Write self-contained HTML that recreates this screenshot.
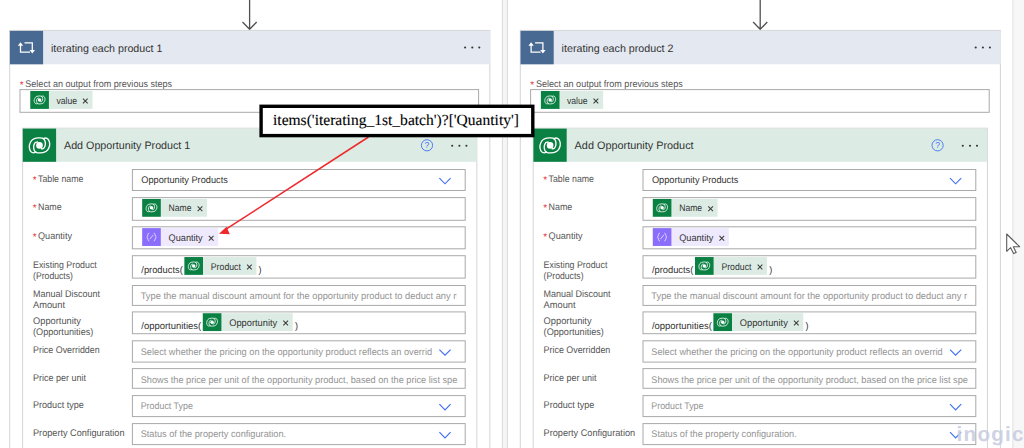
<!DOCTYPE html>
<html><head><meta charset="utf-8"><title>flow</title><style>
html,body{margin:0;padding:0;background:#fff}
body{width:1024px;height:448px;overflow:hidden;position:relative;font-family:"Liberation Sans",sans-serif}
svg{position:absolute;left:0;top:0;display:block}
text{white-space:pre;text-rendering:geometricPrecision}

</style></head><body>
<svg width="1024" height="448" viewBox="0 0 1024 448">
<rect x="502.4" y="0" width="5" height="448" fill="#f6f6f6"/>
<line x1="502.4" y1="0" x2="502.4" y2="448" stroke="#d9d9d9" stroke-width="1"/>
<line x1="507.4" y1="0" x2="507.4" y2="448" stroke="#d9d9d9" stroke-width="1"/>
<rect x="1012.9" y="0" width="12" height="448" fill="#f7f7f7"/>
<line x1="1012.9" y1="0" x2="1012.9" y2="448" stroke="#e0e0e0" stroke-width="1"/>
<path d="M249.6,0 V29 M242.5,22 L249.6,29.3 L256.7,22" fill="none" stroke="#505050" stroke-width="1.3"/>
<path d="M760.2,0 V29 M753.1,22 L760.2,29.3 L767.3000000000001,22" fill="none" stroke="#505050" stroke-width="1.3"/>
<rect x="9.70" y="30.40" width="480.10" height="439.60" fill="none" stroke="#d4d4d4" stroke-width="1"/>
<rect x="9.90" y="30.90" width="480.30" height="33.40" fill="#e4e8f0"/>
<rect x="9.90" y="30.90" width="33.20" height="33.40" fill="#486991"/>
<g transform="translate(0.00,0)"><g fill="none" stroke="#fff" stroke-width="1.25"><path d="M20.5,44 V52.2 H30"/><path d="M24.5,42.9 H32.3 V51"/></g><path d="M17.8,45.7 L20.5,42.2 L23.2,45.7 Z M29.6,50 L32.3,53.5 L35,50 Z" fill="#fff"/></g>
<circle cx="465.10" cy="47.50" r="1.05" fill="#333"/>
<circle cx="472.30" cy="47.50" r="1.05" fill="#333"/>
<circle cx="479.30" cy="47.50" r="1.05" fill="#333"/>
<rect x="20.00" y="89.60" width="458.60" height="22.70" fill="#fff" stroke="#a9a9a9" stroke-width="1"/>
<rect x="30.30" y="91.00" width="62.20" height="17.90" fill="#dcece4"/>
<rect x="30.30" y="91.00" width="18.60" height="17.90" fill="#0a8143"/>
<g transform="translate(39.60,99.95) scale(0.530)" fill="none" stroke="#fff" stroke-width="1.51" stroke-linecap="round" stroke-linejoin="round"><path d="M3.60,-6.60 C3.98,-6.73 5.07,-7.47 5.90,-7.40 C6.73,-7.33 7.92,-6.93 8.60,-6.20 C9.28,-5.47 9.77,-4.13 10.00,-3.00 C10.23,-1.87 10.33,-0.70 10.00,0.60 C9.67,1.90 8.83,3.77 8.00,4.80 C7.17,5.83 6.17,6.35 5.00,6.80 C3.83,7.25 2.33,7.43 1.00,7.50 C-0.33,7.57 -2.02,7.52 -3.00,7.20 C-3.98,6.88 -4.43,6.33 -4.90,5.60 C-5.37,4.87 -5.68,3.77 -5.80,2.80 C-5.92,1.83 -5.87,0.73 -5.60,-0.20 C-5.33,-1.13 -4.80,-2.27 -4.20,-2.80 C-3.60,-3.33 -2.37,-3.30 -2.00,-3.40"/><path d="M3.60,-6.60 C3.98,-6.73 5.07,-7.47 5.90,-7.40 C6.73,-7.33 7.92,-6.93 8.60,-6.20 C9.28,-5.47 9.77,-4.13 10.00,-3.00 C10.23,-1.87 10.33,-0.70 10.00,0.60 C9.67,1.90 8.83,3.77 8.00,4.80 C7.17,5.83 6.17,6.35 5.00,6.80 C3.83,7.25 2.33,7.43 1.00,7.50 C-0.33,7.57 -2.02,7.52 -3.00,7.20 C-3.98,6.88 -4.43,6.33 -4.90,5.60 C-5.37,4.87 -5.68,3.77 -5.80,2.80 C-5.92,1.83 -5.87,0.73 -5.60,-0.20 C-5.33,-1.13 -4.80,-2.27 -4.20,-2.80 C-3.60,-3.33 -2.37,-3.30 -2.00,-3.40" transform="rotate(180)"/><circle cx="0" cy="0" r="3.3" fill="#fff" stroke="none"/></g>
<path d="M82.95,98.65 L87.65,103.35 M87.65,98.65 L82.95,103.35" stroke="#3c3c3c" stroke-width="1.05" fill="none"/>
<rect x="22.60" y="128.20" width="454.20" height="341.80" fill="none" stroke="#d4d4d4" stroke-width="1"/>
<rect x="22.80" y="128.60" width="454.00" height="33.20" fill="#dcece4"/>
<rect x="22.80" y="128.60" width="33.30" height="33.20" fill="#0a8143"/>
<g transform="translate(39.50,145.40) scale(1.000)" fill="none" stroke="#fff" stroke-width="1.35" stroke-linecap="round" stroke-linejoin="round"><path d="M3.60,-6.60 C3.98,-6.73 5.07,-7.47 5.90,-7.40 C6.73,-7.33 7.92,-6.93 8.60,-6.20 C9.28,-5.47 9.77,-4.13 10.00,-3.00 C10.23,-1.87 10.33,-0.70 10.00,0.60 C9.67,1.90 8.83,3.77 8.00,4.80 C7.17,5.83 6.17,6.35 5.00,6.80 C3.83,7.25 2.33,7.43 1.00,7.50 C-0.33,7.57 -2.02,7.52 -3.00,7.20 C-3.98,6.88 -4.43,6.33 -4.90,5.60 C-5.37,4.87 -5.68,3.77 -5.80,2.80 C-5.92,1.83 -5.87,0.73 -5.60,-0.20 C-5.33,-1.13 -4.80,-2.27 -4.20,-2.80 C-3.60,-3.33 -2.37,-3.30 -2.00,-3.40"/><path d="M3.60,-6.60 C3.98,-6.73 5.07,-7.47 5.90,-7.40 C6.73,-7.33 7.92,-6.93 8.60,-6.20 C9.28,-5.47 9.77,-4.13 10.00,-3.00 C10.23,-1.87 10.33,-0.70 10.00,0.60 C9.67,1.90 8.83,3.77 8.00,4.80 C7.17,5.83 6.17,6.35 5.00,6.80 C3.83,7.25 2.33,7.43 1.00,7.50 C-0.33,7.57 -2.02,7.52 -3.00,7.20 C-3.98,6.88 -4.43,6.33 -4.90,5.60 C-5.37,4.87 -5.68,3.77 -5.80,2.80 C-5.92,1.83 -5.87,0.73 -5.60,-0.20 C-5.33,-1.13 -4.80,-2.27 -4.20,-2.80 C-3.60,-3.33 -2.37,-3.30 -2.00,-3.40" transform="rotate(180)"/><circle cx="0" cy="0" r="3.3" fill="#fff" stroke="none"/></g>
<circle cx="427.00" cy="145.3" r="5.6" fill="none" stroke="#4070f4" stroke-width="0.9"/>
<circle cx="452.20" cy="145.70" r="1.05" fill="#333"/>
<circle cx="459.40" cy="145.70" r="1.05" fill="#333"/>
<circle cx="466.40" cy="145.70" r="1.05" fill="#333"/>
<rect x="132.40" y="169.50" width="332.80" height="21.00" fill="#fff" stroke="#a9a9a9" stroke-width="1"/>
<path d="M439.40,178.10 L445.00,183.80 L450.60,178.10" fill="none" stroke="#4070f4" stroke-width="1.15"/>
<rect x="132.40" y="197.60" width="332.80" height="22.70" fill="#fff" stroke="#a9a9a9" stroke-width="1"/>
<rect x="142.20" y="198.95" width="64.80" height="17.80" fill="#dcece4"/>
<rect x="142.20" y="198.95" width="18.60" height="17.80" fill="#0a8143"/>
<g transform="translate(151.50,207.85) scale(0.530)" fill="none" stroke="#fff" stroke-width="1.51" stroke-linecap="round" stroke-linejoin="round"><path d="M3.60,-6.60 C3.98,-6.73 5.07,-7.47 5.90,-7.40 C6.73,-7.33 7.92,-6.93 8.60,-6.20 C9.28,-5.47 9.77,-4.13 10.00,-3.00 C10.23,-1.87 10.33,-0.70 10.00,0.60 C9.67,1.90 8.83,3.77 8.00,4.80 C7.17,5.83 6.17,6.35 5.00,6.80 C3.83,7.25 2.33,7.43 1.00,7.50 C-0.33,7.57 -2.02,7.52 -3.00,7.20 C-3.98,6.88 -4.43,6.33 -4.90,5.60 C-5.37,4.87 -5.68,3.77 -5.80,2.80 C-5.92,1.83 -5.87,0.73 -5.60,-0.20 C-5.33,-1.13 -4.80,-2.27 -4.20,-2.80 C-3.60,-3.33 -2.37,-3.30 -2.00,-3.40"/><path d="M3.60,-6.60 C3.98,-6.73 5.07,-7.47 5.90,-7.40 C6.73,-7.33 7.92,-6.93 8.60,-6.20 C9.28,-5.47 9.77,-4.13 10.00,-3.00 C10.23,-1.87 10.33,-0.70 10.00,0.60 C9.67,1.90 8.83,3.77 8.00,4.80 C7.17,5.83 6.17,6.35 5.00,6.80 C3.83,7.25 2.33,7.43 1.00,7.50 C-0.33,7.57 -2.02,7.52 -3.00,7.20 C-3.98,6.88 -4.43,6.33 -4.90,5.60 C-5.37,4.87 -5.68,3.77 -5.80,2.80 C-5.92,1.83 -5.87,0.73 -5.60,-0.20 C-5.33,-1.13 -4.80,-2.27 -4.20,-2.80 C-3.60,-3.33 -2.37,-3.30 -2.00,-3.40" transform="rotate(180)"/><circle cx="0" cy="0" r="3.3" fill="#fff" stroke="none"/></g>
<path d="M197.65,206.35 L202.35,211.05 M202.35,206.35 L197.65,211.05" stroke="#3c3c3c" stroke-width="1.05" fill="none"/>
<rect x="132.40" y="226.80" width="332.80" height="22.00" fill="#fff" stroke="#a9a9a9" stroke-width="1"/>
<rect x="142.20" y="228.15" width="76.00" height="17.80" fill="#eee9fd"/>
<rect x="142.20" y="228.15" width="18.60" height="17.80" fill="#8b6dfb"/>
<g transform="translate(151.50,237.05)" fill="none" stroke="#e4dcff" stroke-width="0.9" stroke-linecap="round"><path d="M-2.6,-4 C-4.2,-4 -3.2,-0.6 -4.7,0 C-3.2,0.6 -4.2,4 -2.6,4"/><path d="M2.6,-4 C4.2,-4 3.2,-0.6 4.7,0 C3.2,0.6 4.2,4 2.6,4"/><path d="M-1.5,1.8 L1.5,-1.8"/></g>
<path d="M208.85,235.85 L213.55,240.55 M213.55,235.85 L208.85,240.55" stroke="#3c3c3c" stroke-width="1.05" fill="none"/>
<rect x="132.40" y="255.70" width="332.80" height="22.40" fill="#fff" stroke="#a9a9a9" stroke-width="1"/>
<rect x="184.40" y="257.05" width="72.00" height="17.80" fill="#dcece4"/>
<rect x="184.40" y="257.05" width="18.60" height="17.80" fill="#0a8143"/>
<g transform="translate(193.70,265.95) scale(0.530)" fill="none" stroke="#fff" stroke-width="1.51" stroke-linecap="round" stroke-linejoin="round"><path d="M3.60,-6.60 C3.98,-6.73 5.07,-7.47 5.90,-7.40 C6.73,-7.33 7.92,-6.93 8.60,-6.20 C9.28,-5.47 9.77,-4.13 10.00,-3.00 C10.23,-1.87 10.33,-0.70 10.00,0.60 C9.67,1.90 8.83,3.77 8.00,4.80 C7.17,5.83 6.17,6.35 5.00,6.80 C3.83,7.25 2.33,7.43 1.00,7.50 C-0.33,7.57 -2.02,7.52 -3.00,7.20 C-3.98,6.88 -4.43,6.33 -4.90,5.60 C-5.37,4.87 -5.68,3.77 -5.80,2.80 C-5.92,1.83 -5.87,0.73 -5.60,-0.20 C-5.33,-1.13 -4.80,-2.27 -4.20,-2.80 C-3.60,-3.33 -2.37,-3.30 -2.00,-3.40"/><path d="M3.60,-6.60 C3.98,-6.73 5.07,-7.47 5.90,-7.40 C6.73,-7.33 7.92,-6.93 8.60,-6.20 C9.28,-5.47 9.77,-4.13 10.00,-3.00 C10.23,-1.87 10.33,-0.70 10.00,0.60 C9.67,1.90 8.83,3.77 8.00,4.80 C7.17,5.83 6.17,6.35 5.00,6.80 C3.83,7.25 2.33,7.43 1.00,7.50 C-0.33,7.57 -2.02,7.52 -3.00,7.20 C-3.98,6.88 -4.43,6.33 -4.90,5.60 C-5.37,4.87 -5.68,3.77 -5.80,2.80 C-5.92,1.83 -5.87,0.73 -5.60,-0.20 C-5.33,-1.13 -4.80,-2.27 -4.20,-2.80 C-3.60,-3.33 -2.37,-3.30 -2.00,-3.40" transform="rotate(180)"/><circle cx="0" cy="0" r="3.3" fill="#fff" stroke="none"/></g>
<path d="M247.05,264.65 L251.75,269.35 M251.75,264.65 L247.05,269.35" stroke="#3c3c3c" stroke-width="1.05" fill="none"/>
<rect x="132.40" y="285.50" width="332.80" height="19.90" fill="#fff" stroke="#a9a9a9" stroke-width="1"/>
<rect x="132.40" y="311.90" width="332.80" height="21.80" fill="#fff" stroke="#a9a9a9" stroke-width="1"/>
<rect x="202.80" y="313.25" width="89.90" height="17.80" fill="#dcece4"/>
<rect x="202.80" y="313.25" width="18.60" height="17.80" fill="#0a8143"/>
<g transform="translate(212.10,322.15) scale(0.530)" fill="none" stroke="#fff" stroke-width="1.51" stroke-linecap="round" stroke-linejoin="round"><path d="M3.60,-6.60 C3.98,-6.73 5.07,-7.47 5.90,-7.40 C6.73,-7.33 7.92,-6.93 8.60,-6.20 C9.28,-5.47 9.77,-4.13 10.00,-3.00 C10.23,-1.87 10.33,-0.70 10.00,0.60 C9.67,1.90 8.83,3.77 8.00,4.80 C7.17,5.83 6.17,6.35 5.00,6.80 C3.83,7.25 2.33,7.43 1.00,7.50 C-0.33,7.57 -2.02,7.52 -3.00,7.20 C-3.98,6.88 -4.43,6.33 -4.90,5.60 C-5.37,4.87 -5.68,3.77 -5.80,2.80 C-5.92,1.83 -5.87,0.73 -5.60,-0.20 C-5.33,-1.13 -4.80,-2.27 -4.20,-2.80 C-3.60,-3.33 -2.37,-3.30 -2.00,-3.40"/><path d="M3.60,-6.60 C3.98,-6.73 5.07,-7.47 5.90,-7.40 C6.73,-7.33 7.92,-6.93 8.60,-6.20 C9.28,-5.47 9.77,-4.13 10.00,-3.00 C10.23,-1.87 10.33,-0.70 10.00,0.60 C9.67,1.90 8.83,3.77 8.00,4.80 C7.17,5.83 6.17,6.35 5.00,6.80 C3.83,7.25 2.33,7.43 1.00,7.50 C-0.33,7.57 -2.02,7.52 -3.00,7.20 C-3.98,6.88 -4.43,6.33 -4.90,5.60 C-5.37,4.87 -5.68,3.77 -5.80,2.80 C-5.92,1.83 -5.87,0.73 -5.60,-0.20 C-5.33,-1.13 -4.80,-2.27 -4.20,-2.80 C-3.60,-3.33 -2.37,-3.30 -2.00,-3.40" transform="rotate(180)"/><circle cx="0" cy="0" r="3.3" fill="#fff" stroke="none"/></g>
<path d="M283.35,320.65 L288.05,325.35 M288.05,320.65 L283.35,325.35" stroke="#3c3c3c" stroke-width="1.05" fill="none"/>
<rect x="132.40" y="340.80" width="332.80" height="21.30" fill="#fff" stroke="#a9a9a9" stroke-width="1"/>
<path d="M439.40,349.55 L445.00,355.25 L450.60,349.55" fill="none" stroke="#4070f4" stroke-width="1.15"/>
<rect x="132.40" y="368.60" width="332.80" height="19.70" fill="#fff" stroke="#a9a9a9" stroke-width="1"/>
<rect x="132.40" y="395.60" width="332.80" height="21.00" fill="#fff" stroke="#a9a9a9" stroke-width="1"/>
<path d="M439.40,404.20 L445.00,409.90 L450.60,404.20" fill="none" stroke="#4070f4" stroke-width="1.15"/>
<rect x="132.40" y="423.60" width="332.80" height="21.00" fill="#fff" stroke="#a9a9a9" stroke-width="1"/>
<path d="M439.40,432.20 L445.00,437.90 L450.60,432.20" fill="none" stroke="#4070f4" stroke-width="1.15"/>
<rect x="520.30" y="30.40" width="480.10" height="439.60" fill="none" stroke="#d4d4d4" stroke-width="1"/>
<rect x="520.50" y="30.90" width="480.30" height="33.40" fill="#e4e8f0"/>
<rect x="520.50" y="30.90" width="33.20" height="33.40" fill="#486991"/>
<g transform="translate(510.60,0)"><g fill="none" stroke="#fff" stroke-width="1.25"><path d="M20.5,44 V52.2 H30"/><path d="M24.5,42.9 H32.3 V51"/></g><path d="M17.8,45.7 L20.5,42.2 L23.2,45.7 Z M29.6,50 L32.3,53.5 L35,50 Z" fill="#fff"/></g>
<circle cx="975.70" cy="47.50" r="1.05" fill="#333"/>
<circle cx="982.90" cy="47.50" r="1.05" fill="#333"/>
<circle cx="989.90" cy="47.50" r="1.05" fill="#333"/>
<rect x="530.60" y="89.60" width="458.60" height="22.70" fill="#fff" stroke="#a9a9a9" stroke-width="1"/>
<rect x="540.90" y="91.00" width="62.20" height="17.90" fill="#dcece4"/>
<rect x="540.90" y="91.00" width="18.60" height="17.90" fill="#0a8143"/>
<g transform="translate(550.20,99.95) scale(0.530)" fill="none" stroke="#fff" stroke-width="1.51" stroke-linecap="round" stroke-linejoin="round"><path d="M3.60,-6.60 C3.98,-6.73 5.07,-7.47 5.90,-7.40 C6.73,-7.33 7.92,-6.93 8.60,-6.20 C9.28,-5.47 9.77,-4.13 10.00,-3.00 C10.23,-1.87 10.33,-0.70 10.00,0.60 C9.67,1.90 8.83,3.77 8.00,4.80 C7.17,5.83 6.17,6.35 5.00,6.80 C3.83,7.25 2.33,7.43 1.00,7.50 C-0.33,7.57 -2.02,7.52 -3.00,7.20 C-3.98,6.88 -4.43,6.33 -4.90,5.60 C-5.37,4.87 -5.68,3.77 -5.80,2.80 C-5.92,1.83 -5.87,0.73 -5.60,-0.20 C-5.33,-1.13 -4.80,-2.27 -4.20,-2.80 C-3.60,-3.33 -2.37,-3.30 -2.00,-3.40"/><path d="M3.60,-6.60 C3.98,-6.73 5.07,-7.47 5.90,-7.40 C6.73,-7.33 7.92,-6.93 8.60,-6.20 C9.28,-5.47 9.77,-4.13 10.00,-3.00 C10.23,-1.87 10.33,-0.70 10.00,0.60 C9.67,1.90 8.83,3.77 8.00,4.80 C7.17,5.83 6.17,6.35 5.00,6.80 C3.83,7.25 2.33,7.43 1.00,7.50 C-0.33,7.57 -2.02,7.52 -3.00,7.20 C-3.98,6.88 -4.43,6.33 -4.90,5.60 C-5.37,4.87 -5.68,3.77 -5.80,2.80 C-5.92,1.83 -5.87,0.73 -5.60,-0.20 C-5.33,-1.13 -4.80,-2.27 -4.20,-2.80 C-3.60,-3.33 -2.37,-3.30 -2.00,-3.40" transform="rotate(180)"/><circle cx="0" cy="0" r="3.3" fill="#fff" stroke="none"/></g>
<path d="M593.55,98.65 L598.25,103.35 M598.25,98.65 L593.55,103.35" stroke="#3c3c3c" stroke-width="1.05" fill="none"/>
<rect x="533.20" y="128.20" width="454.20" height="341.80" fill="none" stroke="#d4d4d4" stroke-width="1"/>
<rect x="533.40" y="128.60" width="454.00" height="33.20" fill="#dcece4"/>
<rect x="533.40" y="128.60" width="33.30" height="33.20" fill="#0a8143"/>
<g transform="translate(550.10,145.40) scale(1.000)" fill="none" stroke="#fff" stroke-width="1.35" stroke-linecap="round" stroke-linejoin="round"><path d="M3.60,-6.60 C3.98,-6.73 5.07,-7.47 5.90,-7.40 C6.73,-7.33 7.92,-6.93 8.60,-6.20 C9.28,-5.47 9.77,-4.13 10.00,-3.00 C10.23,-1.87 10.33,-0.70 10.00,0.60 C9.67,1.90 8.83,3.77 8.00,4.80 C7.17,5.83 6.17,6.35 5.00,6.80 C3.83,7.25 2.33,7.43 1.00,7.50 C-0.33,7.57 -2.02,7.52 -3.00,7.20 C-3.98,6.88 -4.43,6.33 -4.90,5.60 C-5.37,4.87 -5.68,3.77 -5.80,2.80 C-5.92,1.83 -5.87,0.73 -5.60,-0.20 C-5.33,-1.13 -4.80,-2.27 -4.20,-2.80 C-3.60,-3.33 -2.37,-3.30 -2.00,-3.40"/><path d="M3.60,-6.60 C3.98,-6.73 5.07,-7.47 5.90,-7.40 C6.73,-7.33 7.92,-6.93 8.60,-6.20 C9.28,-5.47 9.77,-4.13 10.00,-3.00 C10.23,-1.87 10.33,-0.70 10.00,0.60 C9.67,1.90 8.83,3.77 8.00,4.80 C7.17,5.83 6.17,6.35 5.00,6.80 C3.83,7.25 2.33,7.43 1.00,7.50 C-0.33,7.57 -2.02,7.52 -3.00,7.20 C-3.98,6.88 -4.43,6.33 -4.90,5.60 C-5.37,4.87 -5.68,3.77 -5.80,2.80 C-5.92,1.83 -5.87,0.73 -5.60,-0.20 C-5.33,-1.13 -4.80,-2.27 -4.20,-2.80 C-3.60,-3.33 -2.37,-3.30 -2.00,-3.40" transform="rotate(180)"/><circle cx="0" cy="0" r="3.3" fill="#fff" stroke="none"/></g>
<circle cx="937.60" cy="145.3" r="5.6" fill="none" stroke="#4070f4" stroke-width="0.9"/>
<circle cx="962.80" cy="145.70" r="1.05" fill="#333"/>
<circle cx="970.00" cy="145.70" r="1.05" fill="#333"/>
<circle cx="977.00" cy="145.70" r="1.05" fill="#333"/>
<rect x="643.00" y="169.50" width="332.80" height="21.00" fill="#fff" stroke="#a9a9a9" stroke-width="1"/>
<path d="M950.00,178.10 L955.60,183.80 L961.20,178.10" fill="none" stroke="#4070f4" stroke-width="1.15"/>
<rect x="643.00" y="197.60" width="332.80" height="22.70" fill="#fff" stroke="#a9a9a9" stroke-width="1"/>
<rect x="652.80" y="198.95" width="64.80" height="17.80" fill="#dcece4"/>
<rect x="652.80" y="198.95" width="18.60" height="17.80" fill="#0a8143"/>
<g transform="translate(662.10,207.85) scale(0.530)" fill="none" stroke="#fff" stroke-width="1.51" stroke-linecap="round" stroke-linejoin="round"><path d="M3.60,-6.60 C3.98,-6.73 5.07,-7.47 5.90,-7.40 C6.73,-7.33 7.92,-6.93 8.60,-6.20 C9.28,-5.47 9.77,-4.13 10.00,-3.00 C10.23,-1.87 10.33,-0.70 10.00,0.60 C9.67,1.90 8.83,3.77 8.00,4.80 C7.17,5.83 6.17,6.35 5.00,6.80 C3.83,7.25 2.33,7.43 1.00,7.50 C-0.33,7.57 -2.02,7.52 -3.00,7.20 C-3.98,6.88 -4.43,6.33 -4.90,5.60 C-5.37,4.87 -5.68,3.77 -5.80,2.80 C-5.92,1.83 -5.87,0.73 -5.60,-0.20 C-5.33,-1.13 -4.80,-2.27 -4.20,-2.80 C-3.60,-3.33 -2.37,-3.30 -2.00,-3.40"/><path d="M3.60,-6.60 C3.98,-6.73 5.07,-7.47 5.90,-7.40 C6.73,-7.33 7.92,-6.93 8.60,-6.20 C9.28,-5.47 9.77,-4.13 10.00,-3.00 C10.23,-1.87 10.33,-0.70 10.00,0.60 C9.67,1.90 8.83,3.77 8.00,4.80 C7.17,5.83 6.17,6.35 5.00,6.80 C3.83,7.25 2.33,7.43 1.00,7.50 C-0.33,7.57 -2.02,7.52 -3.00,7.20 C-3.98,6.88 -4.43,6.33 -4.90,5.60 C-5.37,4.87 -5.68,3.77 -5.80,2.80 C-5.92,1.83 -5.87,0.73 -5.60,-0.20 C-5.33,-1.13 -4.80,-2.27 -4.20,-2.80 C-3.60,-3.33 -2.37,-3.30 -2.00,-3.40" transform="rotate(180)"/><circle cx="0" cy="0" r="3.3" fill="#fff" stroke="none"/></g>
<path d="M708.25,206.35 L712.95,211.05 M712.95,206.35 L708.25,211.05" stroke="#3c3c3c" stroke-width="1.05" fill="none"/>
<rect x="643.00" y="226.80" width="332.80" height="22.00" fill="#fff" stroke="#a9a9a9" stroke-width="1"/>
<rect x="652.80" y="228.15" width="76.00" height="17.80" fill="#eee9fd"/>
<rect x="652.80" y="228.15" width="18.60" height="17.80" fill="#8b6dfb"/>
<g transform="translate(662.10,237.05)" fill="none" stroke="#e4dcff" stroke-width="0.9" stroke-linecap="round"><path d="M-2.6,-4 C-4.2,-4 -3.2,-0.6 -4.7,0 C-3.2,0.6 -4.2,4 -2.6,4"/><path d="M2.6,-4 C4.2,-4 3.2,-0.6 4.7,0 C3.2,0.6 4.2,4 2.6,4"/><path d="M-1.5,1.8 L1.5,-1.8"/></g>
<path d="M719.45,235.85 L724.15,240.55 M724.15,235.85 L719.45,240.55" stroke="#3c3c3c" stroke-width="1.05" fill="none"/>
<rect x="643.00" y="255.70" width="332.80" height="22.40" fill="#fff" stroke="#a9a9a9" stroke-width="1"/>
<rect x="695.00" y="257.05" width="72.00" height="17.80" fill="#dcece4"/>
<rect x="695.00" y="257.05" width="18.60" height="17.80" fill="#0a8143"/>
<g transform="translate(704.30,265.95) scale(0.530)" fill="none" stroke="#fff" stroke-width="1.51" stroke-linecap="round" stroke-linejoin="round"><path d="M3.60,-6.60 C3.98,-6.73 5.07,-7.47 5.90,-7.40 C6.73,-7.33 7.92,-6.93 8.60,-6.20 C9.28,-5.47 9.77,-4.13 10.00,-3.00 C10.23,-1.87 10.33,-0.70 10.00,0.60 C9.67,1.90 8.83,3.77 8.00,4.80 C7.17,5.83 6.17,6.35 5.00,6.80 C3.83,7.25 2.33,7.43 1.00,7.50 C-0.33,7.57 -2.02,7.52 -3.00,7.20 C-3.98,6.88 -4.43,6.33 -4.90,5.60 C-5.37,4.87 -5.68,3.77 -5.80,2.80 C-5.92,1.83 -5.87,0.73 -5.60,-0.20 C-5.33,-1.13 -4.80,-2.27 -4.20,-2.80 C-3.60,-3.33 -2.37,-3.30 -2.00,-3.40"/><path d="M3.60,-6.60 C3.98,-6.73 5.07,-7.47 5.90,-7.40 C6.73,-7.33 7.92,-6.93 8.60,-6.20 C9.28,-5.47 9.77,-4.13 10.00,-3.00 C10.23,-1.87 10.33,-0.70 10.00,0.60 C9.67,1.90 8.83,3.77 8.00,4.80 C7.17,5.83 6.17,6.35 5.00,6.80 C3.83,7.25 2.33,7.43 1.00,7.50 C-0.33,7.57 -2.02,7.52 -3.00,7.20 C-3.98,6.88 -4.43,6.33 -4.90,5.60 C-5.37,4.87 -5.68,3.77 -5.80,2.80 C-5.92,1.83 -5.87,0.73 -5.60,-0.20 C-5.33,-1.13 -4.80,-2.27 -4.20,-2.80 C-3.60,-3.33 -2.37,-3.30 -2.00,-3.40" transform="rotate(180)"/><circle cx="0" cy="0" r="3.3" fill="#fff" stroke="none"/></g>
<path d="M757.65,264.65 L762.35,269.35 M762.35,264.65 L757.65,269.35" stroke="#3c3c3c" stroke-width="1.05" fill="none"/>
<rect x="643.00" y="285.50" width="332.80" height="19.90" fill="#fff" stroke="#a9a9a9" stroke-width="1"/>
<rect x="643.00" y="311.90" width="332.80" height="21.80" fill="#fff" stroke="#a9a9a9" stroke-width="1"/>
<rect x="713.40" y="313.25" width="89.90" height="17.80" fill="#dcece4"/>
<rect x="713.40" y="313.25" width="18.60" height="17.80" fill="#0a8143"/>
<g transform="translate(722.70,322.15) scale(0.530)" fill="none" stroke="#fff" stroke-width="1.51" stroke-linecap="round" stroke-linejoin="round"><path d="M3.60,-6.60 C3.98,-6.73 5.07,-7.47 5.90,-7.40 C6.73,-7.33 7.92,-6.93 8.60,-6.20 C9.28,-5.47 9.77,-4.13 10.00,-3.00 C10.23,-1.87 10.33,-0.70 10.00,0.60 C9.67,1.90 8.83,3.77 8.00,4.80 C7.17,5.83 6.17,6.35 5.00,6.80 C3.83,7.25 2.33,7.43 1.00,7.50 C-0.33,7.57 -2.02,7.52 -3.00,7.20 C-3.98,6.88 -4.43,6.33 -4.90,5.60 C-5.37,4.87 -5.68,3.77 -5.80,2.80 C-5.92,1.83 -5.87,0.73 -5.60,-0.20 C-5.33,-1.13 -4.80,-2.27 -4.20,-2.80 C-3.60,-3.33 -2.37,-3.30 -2.00,-3.40"/><path d="M3.60,-6.60 C3.98,-6.73 5.07,-7.47 5.90,-7.40 C6.73,-7.33 7.92,-6.93 8.60,-6.20 C9.28,-5.47 9.77,-4.13 10.00,-3.00 C10.23,-1.87 10.33,-0.70 10.00,0.60 C9.67,1.90 8.83,3.77 8.00,4.80 C7.17,5.83 6.17,6.35 5.00,6.80 C3.83,7.25 2.33,7.43 1.00,7.50 C-0.33,7.57 -2.02,7.52 -3.00,7.20 C-3.98,6.88 -4.43,6.33 -4.90,5.60 C-5.37,4.87 -5.68,3.77 -5.80,2.80 C-5.92,1.83 -5.87,0.73 -5.60,-0.20 C-5.33,-1.13 -4.80,-2.27 -4.20,-2.80 C-3.60,-3.33 -2.37,-3.30 -2.00,-3.40" transform="rotate(180)"/><circle cx="0" cy="0" r="3.3" fill="#fff" stroke="none"/></g>
<path d="M793.95,320.65 L798.65,325.35 M798.65,320.65 L793.95,325.35" stroke="#3c3c3c" stroke-width="1.05" fill="none"/>
<rect x="643.00" y="340.80" width="332.80" height="21.30" fill="#fff" stroke="#a9a9a9" stroke-width="1"/>
<path d="M950.00,349.55 L955.60,355.25 L961.20,349.55" fill="none" stroke="#4070f4" stroke-width="1.15"/>
<rect x="643.00" y="368.60" width="332.80" height="19.70" fill="#fff" stroke="#a9a9a9" stroke-width="1"/>
<rect x="643.00" y="395.60" width="332.80" height="21.00" fill="#fff" stroke="#a9a9a9" stroke-width="1"/>
<path d="M950.00,404.20 L955.60,409.90 L961.20,404.20" fill="none" stroke="#4070f4" stroke-width="1.15"/>
<rect x="643.00" y="423.60" width="332.80" height="21.00" fill="#fff" stroke="#a9a9a9" stroke-width="1"/>
<path d="M950.00,432.20 L955.60,437.90 L961.20,432.20" fill="none" stroke="#4070f4" stroke-width="1.15"/>
</svg>
<svg width="1024" height="448" viewBox="0 0 1024 448">
<text x="51.00" y="51.90" font-family="Liberation Sans" font-size="10.8" fill="#333" textLength="111.40" lengthAdjust="spacingAndGlyphs">iterating each product 1</text>
<text x="19.70" y="87.80" font-family="Liberation Sans" font-size="10" fill="#e63a40">*</text>
<text x="25.30" y="87.00" font-family="Liberation Sans" font-size="9.6" fill="#555555" textLength="146.80" lengthAdjust="spacingAndGlyphs">Select an output from previous steps</text>
<text x="56.40" y="103.60" font-family="Liberation Sans" font-size="9.6" fill="#333333" textLength="20.60" lengthAdjust="spacingAndGlyphs">value</text>
<text x="64.00" y="149.10" font-family="Liberation Sans" font-size="10.8" fill="#333" textLength="126.30" lengthAdjust="spacingAndGlyphs">Add Opportunity Product 1</text>
<text x="424.60" y="148.40" font-family="Liberation Sans" font-size="8.6" fill="#4070f4">?</text>
<text x="32.70" y="182.70" font-family="Liberation Sans" font-size="10" fill="#e63a40">*</text>
<text x="38.00" y="181.90" font-family="Liberation Sans" font-size="9.6" fill="#555555" textLength="45.40" lengthAdjust="spacingAndGlyphs">Table name</text>
<text x="141.30" y="183.30" font-family="Liberation Sans" font-size="9.6" fill="#333333" textLength="86.50" lengthAdjust="spacingAndGlyphs">Opportunity Products</text>
<text x="32.70" y="210.60" font-family="Liberation Sans" font-size="10" fill="#e63a40">*</text>
<text x="38.00" y="209.80" font-family="Liberation Sans" font-size="9.6" fill="#555555" textLength="23.70" lengthAdjust="spacingAndGlyphs">Name</text>
<text x="168.60" y="211.30" font-family="Liberation Sans" font-size="9.6" fill="#333333" textLength="22.90" lengthAdjust="spacingAndGlyphs">Name</text>
<text x="32.70" y="239.60" font-family="Liberation Sans" font-size="10" fill="#e63a40">*</text>
<text x="38.00" y="238.80" font-family="Liberation Sans" font-size="9.6" fill="#555555" textLength="34.00" lengthAdjust="spacingAndGlyphs">Quantity</text>
<text x="168.60" y="240.80" font-family="Liberation Sans" font-size="9.6" fill="#333333" textLength="34.10" lengthAdjust="spacingAndGlyphs">Quantity</text>
<text x="33.00" y="268.10" font-family="Liberation Sans" font-size="9.6" fill="#555555" textLength="63.80" lengthAdjust="spacingAndGlyphs">Existing Product</text>
<text x="33.00" y="279.30" font-family="Liberation Sans" font-size="9.6" fill="#555555" textLength="40.00" lengthAdjust="spacingAndGlyphs">(Products)</text>
<text x="141.30" y="273.10" font-family="Liberation Sans" font-size="9.6" fill="#333333" textLength="41.50" lengthAdjust="spacingAndGlyphs">/products(</text>
<text x="210.80" y="269.60" font-family="Liberation Sans" font-size="9.6" fill="#333333" textLength="30.10" lengthAdjust="spacingAndGlyphs">Product</text>
<g transform="translate(258.60,0) scale(0.9400,1) translate(-258.60,0)"><text x="258.60" y="273.10" font-family="Liberation Sans" font-size="9.6" fill="#333333">)</text></g>
<text x="33.00" y="297.10" font-family="Liberation Sans" font-size="9.6" fill="#555555" textLength="67.00" lengthAdjust="spacingAndGlyphs">Manual Discount</text>
<text x="33.00" y="308.30" font-family="Liberation Sans" font-size="9.6" fill="#555555" textLength="32.00" lengthAdjust="spacingAndGlyphs">Amount</text>
<clipPath id="c1"><rect x="139.70" y="287.30" width="316.80" height="18"/></clipPath><g clip-path="url(#c1)"><text x="140.70" y="299.30" font-family="Liberation Sans" font-size="9.6" fill="#949494" textLength="317.80" lengthAdjust="spacingAndGlyphs">Type the manual discount amount for the opportunity product to deduct any n</text></g>
<text x="33.00" y="323.50" font-family="Liberation Sans" font-size="9.6" fill="#555555" textLength="48.00" lengthAdjust="spacingAndGlyphs">Opportunity</text>
<text x="33.00" y="334.80" font-family="Liberation Sans" font-size="9.6" fill="#555555" textLength="60.30" lengthAdjust="spacingAndGlyphs">(Opportunities)</text>
<text x="141.30" y="328.90" font-family="Liberation Sans" font-size="9.6" fill="#333333" textLength="59.90" lengthAdjust="spacingAndGlyphs">/opportunities(</text>
<text x="229.20" y="325.60" font-family="Liberation Sans" font-size="9.6" fill="#333333" textLength="48.00" lengthAdjust="spacingAndGlyphs">Opportunity</text>
<g transform="translate(294.90,0) scale(0.9400,1) translate(-294.90,0)"><text x="294.90" y="328.90" font-family="Liberation Sans" font-size="9.6" fill="#333333">)</text></g>
<text x="33.00" y="353.10" font-family="Liberation Sans" font-size="9.6" fill="#555555" textLength="66.70" lengthAdjust="spacingAndGlyphs">Price Overridden</text>
<clipPath id="c2"><rect x="139.70" y="342.90" width="293.30" height="18"/></clipPath><g clip-path="url(#c2)"><text x="140.70" y="354.90" font-family="Liberation Sans" font-size="9.6" fill="#949494" textLength="291.40" lengthAdjust="spacingAndGlyphs">Select whether the pricing on the opportunity product reflects an overrid</text></g>
<text x="33.00" y="381.30" font-family="Liberation Sans" font-size="9.6" fill="#555555" textLength="52.90" lengthAdjust="spacingAndGlyphs">Price per unit</text>
<clipPath id="c3"><rect x="139.70" y="370.70" width="318.30" height="18"/></clipPath><g clip-path="url(#c3)"><text x="140.70" y="382.70" font-family="Liberation Sans" font-size="9.6" fill="#949494" textLength="316.60" lengthAdjust="spacingAndGlyphs">Shows the price per unit of the opportunity product, based on the price list spe</text></g>
<text x="33.00" y="407.70" font-family="Liberation Sans" font-size="9.6" fill="#555555" textLength="50.80" lengthAdjust="spacingAndGlyphs">Product type</text>
<clipPath id="c4"><rect x="139.70" y="397.40" width="292.60" height="18"/></clipPath><g clip-path="url(#c4)"><text x="140.70" y="409.40" font-family="Liberation Sans" font-size="9.6" fill="#949494" textLength="52.20" lengthAdjust="spacingAndGlyphs">Product Type</text></g>
<text x="33.00" y="435.50" font-family="Liberation Sans" font-size="9.6" fill="#555555" textLength="91.50" lengthAdjust="spacingAndGlyphs">Property Configuration</text>
<clipPath id="c5"><rect x="139.70" y="425.40" width="292.60" height="18"/></clipPath><g clip-path="url(#c5)"><text x="140.70" y="437.40" font-family="Liberation Sans" font-size="9.6" fill="#949494" textLength="145.40" lengthAdjust="spacingAndGlyphs">Status of the property configuration.</text></g>
<text x="561.60" y="51.90" font-family="Liberation Sans" font-size="10.8" fill="#333" textLength="111.90" lengthAdjust="spacingAndGlyphs">iterating each product 2</text>
<text x="530.30" y="87.80" font-family="Liberation Sans" font-size="10" fill="#e63a40">*</text>
<text x="535.90" y="87.00" font-family="Liberation Sans" font-size="9.6" fill="#555555" textLength="146.80" lengthAdjust="spacingAndGlyphs">Select an output from previous steps</text>
<text x="567.00" y="103.60" font-family="Liberation Sans" font-size="9.6" fill="#333333" textLength="20.60" lengthAdjust="spacingAndGlyphs">value</text>
<text x="574.60" y="149.10" font-family="Liberation Sans" font-size="10.8" fill="#333" textLength="119.00" lengthAdjust="spacingAndGlyphs">Add Opportunity Product</text>
<text x="935.20" y="148.40" font-family="Liberation Sans" font-size="8.6" fill="#4070f4">?</text>
<text x="543.30" y="182.70" font-family="Liberation Sans" font-size="10" fill="#e63a40">*</text>
<text x="548.60" y="181.90" font-family="Liberation Sans" font-size="9.6" fill="#555555" textLength="45.40" lengthAdjust="spacingAndGlyphs">Table name</text>
<text x="651.90" y="183.30" font-family="Liberation Sans" font-size="9.6" fill="#333333" textLength="86.50" lengthAdjust="spacingAndGlyphs">Opportunity Products</text>
<text x="543.30" y="210.60" font-family="Liberation Sans" font-size="10" fill="#e63a40">*</text>
<text x="548.60" y="209.80" font-family="Liberation Sans" font-size="9.6" fill="#555555" textLength="23.70" lengthAdjust="spacingAndGlyphs">Name</text>
<text x="679.20" y="211.30" font-family="Liberation Sans" font-size="9.6" fill="#333333" textLength="22.90" lengthAdjust="spacingAndGlyphs">Name</text>
<text x="543.30" y="239.60" font-family="Liberation Sans" font-size="10" fill="#e63a40">*</text>
<text x="548.60" y="238.80" font-family="Liberation Sans" font-size="9.6" fill="#555555" textLength="34.00" lengthAdjust="spacingAndGlyphs">Quantity</text>
<text x="679.20" y="240.80" font-family="Liberation Sans" font-size="9.6" fill="#333333" textLength="34.10" lengthAdjust="spacingAndGlyphs">Quantity</text>
<text x="543.60" y="268.10" font-family="Liberation Sans" font-size="9.6" fill="#555555" textLength="63.80" lengthAdjust="spacingAndGlyphs">Existing Product</text>
<text x="543.60" y="279.30" font-family="Liberation Sans" font-size="9.6" fill="#555555" textLength="40.00" lengthAdjust="spacingAndGlyphs">(Products)</text>
<text x="651.90" y="273.10" font-family="Liberation Sans" font-size="9.6" fill="#333333" textLength="41.50" lengthAdjust="spacingAndGlyphs">/products(</text>
<text x="721.40" y="269.60" font-family="Liberation Sans" font-size="9.6" fill="#333333" textLength="30.10" lengthAdjust="spacingAndGlyphs">Product</text>
<g transform="translate(769.20,0) scale(0.9400,1) translate(-769.20,0)"><text x="769.20" y="273.10" font-family="Liberation Sans" font-size="9.6" fill="#333333">)</text></g>
<text x="543.60" y="297.10" font-family="Liberation Sans" font-size="9.6" fill="#555555" textLength="67.00" lengthAdjust="spacingAndGlyphs">Manual Discount</text>
<text x="543.60" y="308.30" font-family="Liberation Sans" font-size="9.6" fill="#555555" textLength="32.00" lengthAdjust="spacingAndGlyphs">Amount</text>
<clipPath id="c6"><rect x="650.30" y="287.30" width="316.80" height="18"/></clipPath><g clip-path="url(#c6)"><text x="651.30" y="299.30" font-family="Liberation Sans" font-size="9.6" fill="#949494" textLength="317.80" lengthAdjust="spacingAndGlyphs">Type the manual discount amount for the opportunity product to deduct any n</text></g>
<text x="543.60" y="323.50" font-family="Liberation Sans" font-size="9.6" fill="#555555" textLength="48.00" lengthAdjust="spacingAndGlyphs">Opportunity</text>
<text x="543.60" y="334.80" font-family="Liberation Sans" font-size="9.6" fill="#555555" textLength="60.30" lengthAdjust="spacingAndGlyphs">(Opportunities)</text>
<text x="651.90" y="328.90" font-family="Liberation Sans" font-size="9.6" fill="#333333" textLength="59.90" lengthAdjust="spacingAndGlyphs">/opportunities(</text>
<text x="739.80" y="325.60" font-family="Liberation Sans" font-size="9.6" fill="#333333" textLength="48.00" lengthAdjust="spacingAndGlyphs">Opportunity</text>
<g transform="translate(805.50,0) scale(0.9400,1) translate(-805.50,0)"><text x="805.50" y="328.90" font-family="Liberation Sans" font-size="9.6" fill="#333333">)</text></g>
<text x="543.60" y="353.10" font-family="Liberation Sans" font-size="9.6" fill="#555555" textLength="66.70" lengthAdjust="spacingAndGlyphs">Price Overridden</text>
<clipPath id="c7"><rect x="650.30" y="342.90" width="293.30" height="18"/></clipPath><g clip-path="url(#c7)"><text x="651.30" y="354.90" font-family="Liberation Sans" font-size="9.6" fill="#949494" textLength="291.40" lengthAdjust="spacingAndGlyphs">Select whether the pricing on the opportunity product reflects an overrid</text></g>
<text x="543.60" y="381.30" font-family="Liberation Sans" font-size="9.6" fill="#555555" textLength="52.90" lengthAdjust="spacingAndGlyphs">Price per unit</text>
<clipPath id="c8"><rect x="650.30" y="370.70" width="318.30" height="18"/></clipPath><g clip-path="url(#c8)"><text x="651.30" y="382.70" font-family="Liberation Sans" font-size="9.6" fill="#949494" textLength="316.60" lengthAdjust="spacingAndGlyphs">Shows the price per unit of the opportunity product, based on the price list spe</text></g>
<text x="543.60" y="407.70" font-family="Liberation Sans" font-size="9.6" fill="#555555" textLength="50.80" lengthAdjust="spacingAndGlyphs">Product type</text>
<clipPath id="c9"><rect x="650.30" y="397.40" width="292.60" height="18"/></clipPath><g clip-path="url(#c9)"><text x="651.30" y="409.40" font-family="Liberation Sans" font-size="9.6" fill="#949494" textLength="52.20" lengthAdjust="spacingAndGlyphs">Product Type</text></g>
<text x="543.60" y="435.50" font-family="Liberation Sans" font-size="9.6" fill="#555555" textLength="91.50" lengthAdjust="spacingAndGlyphs">Property Configuration</text>
<clipPath id="c10"><rect x="650.30" y="425.40" width="292.60" height="18"/></clipPath><g clip-path="url(#c10)"><text x="651.30" y="437.40" font-family="Liberation Sans" font-size="9.6" fill="#949494" textLength="145.40" lengthAdjust="spacingAndGlyphs">Status of the property configuration.</text></g>
<text x="956.60" y="440.90" font-family="Liberation Sans" font-size="20.6" fill="#c8cde1" font-weight="bold" style="letter-spacing:1.25px;opacity:.88;">inogic</text>
<path d="M368.5,137 L224.5,230.2" stroke="#ee2a2e" stroke-width="1.55" fill="none"/>
<path d="M218.9,233.7 L226.6,226.7 L229.8,234.2 Z" fill="#ee2a2e"/>
<rect x="261.1" y="106.3" width="271.7" height="29.3" fill="#fff" stroke="#000" stroke-width="3.4"/>
<path d="M1006.7,234 V251.3 L1010.6,247.7 L1013.6,253.6 L1016.2,252.4 L1013.3,246.7 H1019.6 Z" fill="#fff" stroke="#5c5c5c" stroke-width="1.1" stroke-linejoin="round"/>
<text x="273.00" y="124.80" font-family="Liberation Serif" font-size="15.55" fill="#000" style="stroke:#000;stroke-width:0.1px;" textLength="246.00" lengthAdjust="spacingAndGlyphs">items(&#x27;iterating_1st_batch&#x27;)?[&#x27;Quantity&#x27;]</text>
</svg>
</body></html>
